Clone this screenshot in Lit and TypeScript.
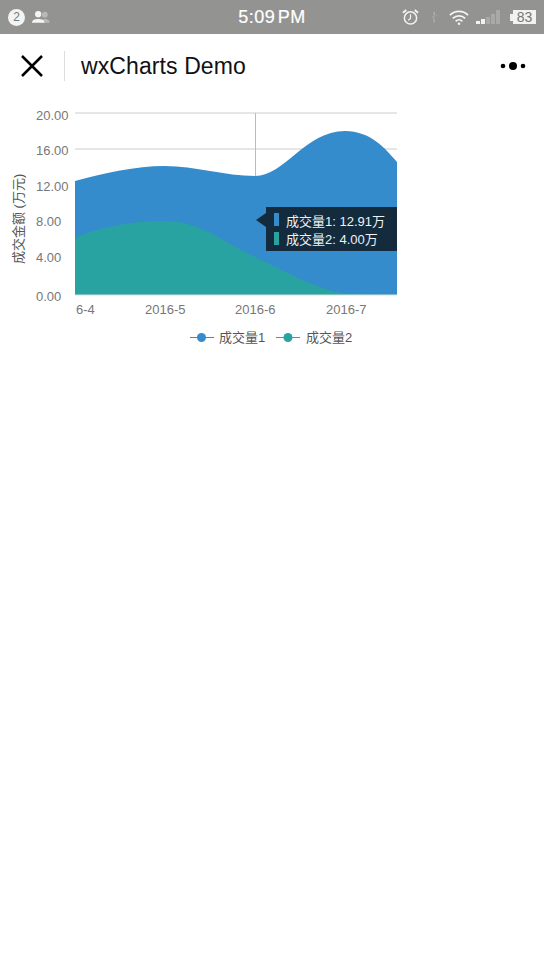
import { LitElement, html, css, svg } from "lit";
import { customElement } from "lit/decorators.js";

const TOP = "M75 181 C105 173,135 166,165 166 C195 166,225 176,255 176 C285 176,305 131,345 131 C370 131,385 148,397 162";
const LOW = "M75 238 C100 227,130 221,165 221 C200 221,225 243,255 257 C285 271,315 289,345 294 C365 295,385 294.5,397 294.5";
const YS: [string, number][] = [["20.00",120],["16.00",155],["12.00",191],["8.00",226],["4.00",262],["0.00",301]];
const XS: [string, number][] = [["6-4",76],["2016-5",145],["2016-6",235],["2016-7",326]];

@customElement("app-root")
export class AppRoot extends LitElement {
  static styles = css`
    :host { display: block; width: 544px; height: 960px; background: #fff; overflow: hidden;
      font-family: "Liberation Sans", "Noto Sans CJK SC", sans-serif; }
    .status { height: 34px; background: #939492; display: grid; grid-template-columns: 1fr auto 1fr; align-items: center; color: #fff; }
    .left { display: flex; align-items: center; gap: 7px; padding-left: 8px; }
    .badge { width: 17px; height: 17px; border-radius: 50%; background: #f4f4f3; color: #777; font-size: 12px;
      display: flex; align-items: center; justify-content: center; }
    .time { font-size: 18px; letter-spacing: 0.5px; word-spacing: -3px; -webkit-text-stroke: 0.2px #fff; }
    .right { display: flex; align-items: center; justify-content: flex-end; padding-right: 8px; }
    .right svg { display: block; }
    .alarm { margin-right: 13px; }
    .carrier { margin-right: 11px; }
    .wifi { margin-right: 7px; }
    .signal { margin-right: 8px; }
    .battery { display: flex; align-items: center; }
    .nub { width: 3px; height: 7px; background: #f0f0f0; }
    .cell { width: 23px; height: 14px; background: #f2f2f2; color: #777; font-size: 14px; line-height: 14px; text-align: center; }
    .nav { height: 64px; display: flex; align-items: center; }
    .close { margin-left: 21px; display: block; }
    .sep { width: 1px; height: 30px; background: #dcdcdc; margin: 0 16px 0 21px; }
    .title { font-size: 23px; color: #111; flex: 1; letter-spacing: 0.1px; }
    .more { margin-right: 18px; display: block; }
    .chart { display: block; margin-top: 2px; }
    .chart text { font-family: "Liberation Sans", "Noto Sans CJK SC", sans-serif; }
    .tick { font-size: 13px; fill: #777; }
    .axis { font-size: 13px; fill: #555; }
    .legend { font-size: 13px; fill: #555; }
    .tip { font-size: 13px; fill: #eef2f4; }
  `;

  render() {
    return html`
      <div class="status">
        <div class="left">
          <div class="badge">2</div>
          <svg width="19" height="14" viewBox="0 0 20 14">
            <circle cx="13.5" cy="4.5" r="3" fill="#b9bab8"/>
            <path d="M9 13c0-3 2-4 4.500-4s5 1 5 4z" fill="#b9bab8"/>
            <circle cx="6.500" cy="4" r="3.300" fill="#f5f5f5"/>
            <path d="M0 13c0-3 3-4 6.500-4s6.500 1 6.500 4z" fill="#f5f5f5"/>
          </svg>
        </div>
        <div class="time">5:09 PM</div>
        <div class="right">
          <svg class="alarm" width="17" height="18" viewBox="0 0 18 18" fill="none" stroke="#f2f2f2">
            <circle cx="9" cy="10" r="6.500" stroke-width="1.600"/>
            <path d="M9 6v4.500l-2.500 2" stroke-width="1.300"/>
            <path d="M1 4.500 4.500 1.500M17 4.500 13.500 1.500" stroke-width="2"/>
          </svg>
          <svg class="carrier" width="6" height="16" viewBox="0 0 8 16" fill="#aeafad">
            <rect x="2" y="1" width="2" height="5"/><rect x="1" y="7" width="2" height="3"/><rect x="2" y="11" width="2" height="4"/><rect x="6" y="5" width="1" height="2"/>
          </svg>
          <svg class="wifi" width="20" height="17" viewBox="0 0 21 17" fill="none" stroke="#f5f5f5" stroke-width="1.800">
            <path d="M1 6a13.500 13.500 0 0 1 19 0"/><path d="M4 9.500a9 9 0 0 1 13 0"/><path d="M7 12.500a5 5 0 0 1 7 0"/>
            <circle cx="10.500" cy="15" r="1.300" fill="#f5f5f5" stroke="none"/>
          </svg>
          <svg class="signal" width="26" height="16" viewBox="0 0 26 16">
            <rect x="0" y="12" width="4" height="3" fill="#f2f2f2"/>
            <rect x="5" y="10" width="4" height="5" fill="#f2f2f2"/>
            <rect x="10" y="8" width="4" height="7" fill="#a9aaa8"/>
            <rect x="15" y="5" width="4" height="10" fill="#a9aaa8"/>
            <rect x="20" y="1" width="4" height="14" fill="#a9aaa8"/>
          </svg>
          <div class="battery"><div class="nub"></div><div class="cell">83</div></div>
        </div>
      </div>
      <div class="nav">
        <svg class="close" width="22" height="22" viewBox="0 0 22 22" stroke="#000" stroke-width="2.500"><path d="M1 1 21 21M21 1 1 21"/></svg>
        <div class="sep"></div>
        <div class="title">wxCharts Demo</div>
        <svg class="more" width="26" height="10" viewBox="0 0 26 10" fill="#000">
          <circle cx="3" cy="5" r="2.300"/><circle cx="13" cy="5" r="4"/><circle cx="23" cy="5" r="2.300"/>
        </svg>
      </div>
      <svg class="chart" width="544" height="260" viewBox="0 100 544 260">
        <line x1="75" y1="113" x2="397" y2="113" stroke="#ccc"/>
        <line x1="75" y1="149" x2="397" y2="149" stroke="#ccc"/>
        <line x1="255.500" y1="113" x2="255.500" y2="180" stroke="#bbb"/>
        <path d="${TOP} V295 H75 Z" fill="#358ccd"/>
        <path d="${LOW} V295 H75 Z" fill="#29a3a2"/>
        <line x1="75" y1="295" x2="397" y2="295" stroke="#ddd" stroke-width="1"/>
        ${YS.map(([t, y]) => svg`<text class="tick" x="36" y="${y}">${t}</text>`)}
        ${XS.map(([t, x]) => svg`<text class="tick" x="${x}" y="314">${t}</text>`)}
        <text class="axis" transform="translate(23 264) rotate(-90)">成交金额 (万元)</text>
        <path d="M266 213 L256 220 L266 227 Z" fill="#132b3d"/>
        <rect x="266" y="207" width="131" height="44" fill="#132b3d"/>
        <rect x="274" y="213" width="5" height="13" fill="#358ccd"/>
        <rect x="274" y="232" width="5" height="13" fill="#29a3a2"/>
        <text class="tip" x="286" y="226">成交量1: 12.91万</text>
        <text class="tip" x="286" y="244">成交量2: 4.00万</text>
        <line x1="190" y1="337.500" x2="214" y2="337.500" stroke="#358ccd"/>
        <circle cx="201.500" cy="337.500" r="4.500" fill="#358ccd"/>
        <text class="legend" x="219" y="342">成交量1</text>
        <line x1="276" y1="337.500" x2="300" y2="337.500" stroke="#29a3a2"/>
        <circle cx="288" cy="337.500" r="4.500" fill="#29a3a2"/>
        <text class="legend" x="306" y="342">成交量2</text>
      </svg>
    `;
  }
}
